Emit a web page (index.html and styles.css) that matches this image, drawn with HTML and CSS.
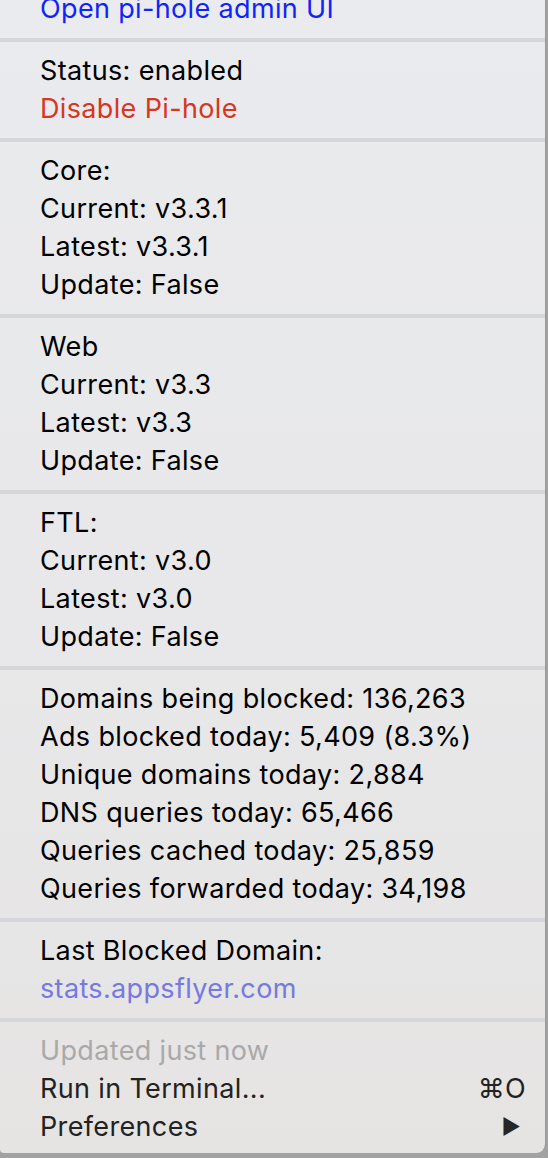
FILE: index.html
```html
<!DOCTYPE html>
<html>
<head>
<meta charset="utf-8">
<link rel="stylesheet" href="styles.css">
</head>
<body>
<div class="menu">
  <div class="item link-blue">Open pi-hole admin UI</div>
  <div class="sep"></div>
  <div class="item">Status: enabled</div>
  <div class="item danger">Disable Pi-hole</div>
  <div class="sep"></div>
  <div class="item">Core:</div>
  <div class="item">Current: v3.3.1</div>
  <div class="item">Latest: v3.3.1</div>
  <div class="item">Update: False</div>
  <div class="sep"></div>
  <div class="item">Web</div>
  <div class="item">Current: v3.3</div>
  <div class="item">Latest: v3.3</div>
  <div class="item">Update: False</div>
  <div class="sep"></div>
  <div class="item">FTL:</div>
  <div class="item">Current: v3.0</div>
  <div class="item">Latest: v3.0</div>
  <div class="item">Update: False</div>
  <div class="sep"></div>
  <div class="item">Domains being blocked: 136,263</div>
  <div class="item">Ads blocked today: 5,409 (8.3%)</div>
  <div class="item">Unique domains today: 2,884</div>
  <div class="item">DNS queries today: 65,466</div>
  <div class="item">Queries cached today: 25,859</div>
  <div class="item">Queries forwarded today: 34,198</div>
  <div class="sep"></div>
  <div class="item">Last Blocked Domain:</div>
  <div class="item domain">stats.appsflyer.com</div>
  <div class="sep"></div>
  <div class="item disabled">Updated just now</div>
  <div class="item action"><span class="label">Run in Terminal...</span><span class="shortcut">⌘O</span></div>
  <div class="item action"><span class="label">Preferences</span><span class="submenu">▶</span></div>
</div>
</body>
</html>
```
FILE: styles.css
```css
html, body {
  margin: 0;
  padding: 0;
}
body {
  background: #a2a2a2;
  width: 548px;
  height: 1158px;
  overflow: hidden;
  font-family: Inter, "Noto Sans", sans-serif;
}
.menu {
  width: 545px;
  margin-top: -10px;
  padding-bottom: 7px;
  background: linear-gradient(180deg, #eaebee 0%, #e8e8ea 50%, #e6e4e3 100%);
  border-right: 1px solid #9a9a9a;
  border-bottom-right-radius: 9px;
  border-bottom-left-radius: 4px;
  display: flex;
  flex-direction: column;
}
.item {
  height: 38px;
  line-height: 38px;
  padding-left: 40px;
  padding-right: 19px;
  font-size: 27px;
  color: #000;
  white-space: nowrap;
  letter-spacing: 0.35px;
}
.link-blue { color: #1024f6; }
.danger { color: #d8361f; }
.domain { color: #7579e0; }
.disabled { color: #a9a9a9; }
.action {
  display: flex;
  justify-content: space-between;
  align-items: center;
  color: #222;
}
.shortcut {
  color: #222;
}
.submenu {
  font-size: 21px;
  color: #262626;
  padding-right: 5px;
}
.sep {
  height: 24px;
  display: flex;
  align-items: center;
}
.sep::before {
  content: "";
  display: block;
  width: 100%;
  height: 4px;
  background: #d5d6d9;
}
```
